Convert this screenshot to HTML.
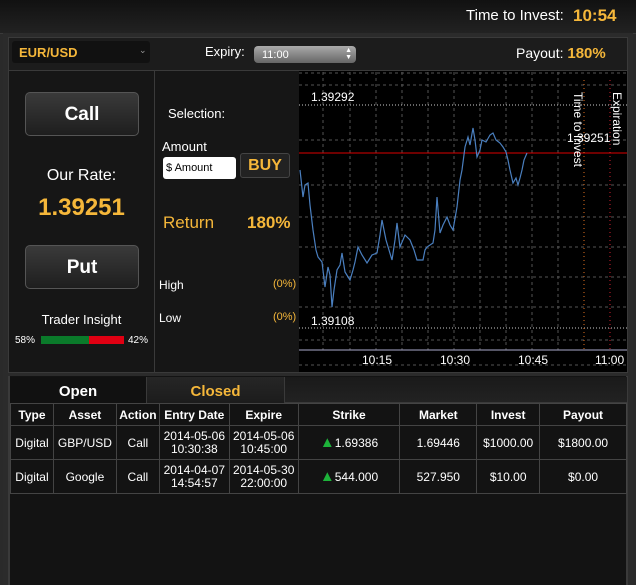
<!DOCTYPE html>
<html><head><meta charset="utf-8"><style>
*{margin:0;padding:0;box-sizing:border-box}
body{width:636px;height:585px;background:#2a2a2a;font-family:"Liberation Sans",sans-serif;color:#fff;position:relative;overflow:hidden}
.a{position:absolute}
.gold{color:#f5b73a}
.btn{position:absolute;background:linear-gradient(#3a3a3a,#1e1e1e);border:1px solid #555;border-radius:5px;font-weight:bold;font-size:19px;text-align:center}
table{border-collapse:collapse;font-size:12px}
td,th{border:1px solid #444;text-align:center;padding:0}
th{font-size:12px;font-weight:bold}
</style></head><body>
<div class="a" style="left:0;top:0;width:636px;height:34px;background:linear-gradient(#111,#222);border-bottom:1px solid #3a3a3a"></div>
<div class="a" style="left:466px;top:7px;font-size:15px">Time to Invest:</div>
<div class="a gold" style="left:573px;top:6px;font-size:17px;font-weight:bold">10:54</div>
<!-- main panel -->
<div class="a" style="left:3px;top:33px;width:630px;height:552px;background:#2b2b2b"></div>
<div class="a" style="left:8px;top:37px;width:620px;height:336px;background:#161616;border:1px solid #3a3a3a"></div>
<div class="a" style="left:9px;top:38px;width:618px;height:33px;background:#1c1c1c;border-bottom:1px solid #3a3a3a"></div>
<div class="a" style="left:12px;top:41px;width:138px;height:22px;background:#111;border-radius:3px"></div>
<div class="a gold" style="left:19px;top:45px;font-size:13px;font-weight:bold">EUR/USD</div>
<div class="a" style="left:139px;top:45px;font-size:9px;color:#999">&#8964;</div>
<div class="a" style="left:205px;top:44px;font-size:13px">Expiry:</div>
<div class="a" style="left:254px;top:46px;width:102px;height:17px;border-radius:4px;background:linear-gradient(#aaa,#666);font-size:11px;color:#fff;padding:3px 0 0 8px">11:00<span style="position:absolute;right:4px;top:1px;font-size:7px;line-height:7px">▲<br>▼</span></div>
<div class="a" style="left:516px;top:45px;font-size:14px">Payout: <b class="gold" style="font-size:15px">180%</b></div>
<!-- columns -->
<div class="a" style="left:154px;top:71px;width:1px;height:301px;background:#3a3a3a"></div>
<div class="btn" style="left:25px;top:92px;width:114px;height:44px;padding-top:11px">Call</div>
<div class="a" style="left:8px;width:147px;top:167px;text-align:center;font-size:16px">Our Rate:</div>
<div class="a gold" style="left:8px;width:147px;top:194px;text-align:center;font-size:24px;font-weight:bold">1.39251</div>
<div class="btn" style="left:25px;top:245px;width:114px;height:44px;padding-top:11px">Put</div>
<div class="a" style="left:8px;width:147px;top:312px;text-align:center;font-size:13px">Trader Insight</div>
<div class="a" style="left:15px;top:335px;font-size:10px">58%</div>
<div class="a" style="left:41px;top:336px;width:48px;height:8px;background:#0a7a2a"></div>
<div class="a" style="left:89px;top:336px;width:35px;height:8px;background:#e00012"></div>
<div class="a" style="left:128px;top:335px;font-size:10px">42%</div>
<div class="a" style="left:168px;top:106px;font-size:13px">Selection:</div>
<div class="a" style="left:162px;top:139px;font-size:13px">Amount</div>
<div class="a" style="left:163px;top:157px;width:73px;height:22px;background:#fff;border-radius:3px;color:#000;font-size:11px;padding:5px 0 0 3px">$ Amount</div>
<div class="a gold" style="left:240px;top:153px;width:50px;height:25px;background:#222;border:1px solid #444;border-radius:3px;text-align:center;font-weight:bold;font-size:16px;padding-top:3px">BUY</div>
<div class="a gold" style="left:163px;top:213px;font-size:17px">Return</div>
<div class="a gold" style="left:247px;top:213px;font-size:17px;font-weight:bold">180%</div>
<div class="a" style="left:159px;top:278px;font-size:12px">High</div>
<div class="a gold" style="left:273px;top:278px;font-size:11px">(0%)</div>
<div class="a" style="left:159px;top:311px;font-size:12px">Low</div>
<div class="a gold" style="left:273px;top:311px;font-size:11px">(0%)</div>
<!-- chart -->
<svg class="a" style="left:299px;top:71px" width="328" height="301" viewBox="299 71 328 301">
<rect x="299" y="71" width="328" height="301" fill="#000"/>
<g stroke="#555" stroke-dasharray="3,3" stroke-width="1">
<line x1="323" y1="72" x2="323" y2="350"/><line x1="350" y1="72" x2="350" y2="350"/><line x1="376" y1="72" x2="376" y2="350"/><line x1="402" y1="72" x2="402" y2="350"/><line x1="428" y1="72" x2="428" y2="350"/><line x1="454" y1="72" x2="454" y2="350"/><line x1="480" y1="72" x2="480" y2="350"/><line x1="506" y1="72" x2="506" y2="350"/><line x1="532" y1="72" x2="532" y2="350"/><line x1="558" y1="72" x2="558" y2="350"/>
<line x1="299" y1="73" x2="627" y2="73"/><line x1="299" y1="85" x2="627" y2="85"/><line x1="299" y1="140" x2="627" y2="140"/><line x1="299" y1="185" x2="627" y2="185"/><line x1="299" y1="217" x2="627" y2="217"/><line x1="299" y1="247" x2="627" y2="247"/><line x1="299" y1="277" x2="627" y2="277"/><line x1="299" y1="307" x2="627" y2="307"/><line x1="299" y1="340" x2="627" y2="340"/><line x1="299" y1="365" x2="627" y2="365"/>
</g>
<g stroke="#ccc" stroke-dasharray="1,2"><line x1="299" y1="105" x2="627" y2="105"/><line x1="299" y1="328" x2="627" y2="328"/></g>
<line x1="299" y1="153" x2="627" y2="153" stroke="#d00" stroke-width="1"/>
<line x1="584" y1="80" x2="584" y2="350" stroke="#e07020" stroke-dasharray="1,3"/>
<line x1="610" y1="80" x2="610" y2="350" stroke="#d02030" stroke-dasharray="1,3"/>
<line x1="299" y1="350" x2="627" y2="350" stroke="#aac" stroke-width="1"/>
<polyline fill="none" stroke="#4a7fbf" stroke-width="1.2" points="300,170 303,197 305,185 308,183 310,205 313,230 316,250 318,257 322,262 325,287 328,267 330,275 332,307 334,290 337,270 340,265 342,253 345,272 350,280 353,270 355,262 358,247 362,255 367,263 372,255 377,253 380,235 382,220 386,240 392,260 395,240 397,223 400,247 405,235 410,240 414,250 417,260 423,260 425,250 427,247 433,243 435,230 437,197 440,233 443,225 447,217 450,225 453,230 457,207 460,180 462,170 465,147 468,137 470,145 473,128 475,140 477,157 480,150 482,140 486,142 490,135 493,133 496,140 500,143 503,147 506,152 508,160 510,170 513,183 516,178 518,185 520,178 522,170 524,160 527,153"/>
<g fill="#fff" font-family="Liberation Sans,sans-serif" font-size="12">
<text x="311" y="101">1.39292</text><text x="311" y="325">1.39108</text><text x="567" y="142">1.39251</text>
<text x="362" y="364">10:15</text><text x="440" y="364">10:30</text><text x="518" y="364">10:45</text><text x="595" y="364">11:00</text>
<text transform="translate(574,92) rotate(90)">Time to Invest</text>
<text transform="translate(613,92) rotate(90)">Expiration</text>
</g>
</svg>
<!-- bottom -->
<div class="a" style="left:8px;top:376px;width:620px;height:209px;background:#131313;border-left:2px solid #3a3a3a;border-right:2px solid #3a3a3a"></div>
<div class="a" style="left:10px;top:377px;width:617px;height:26px;background:linear-gradient(#1a1a1a,#222);border-bottom:1px solid #3a3a3a"></div>
<div class="a" style="left:10px;top:377px;width:137px;height:26px;background:#111;border-right:1px solid #3a3a3a;text-align:center;font-weight:bold;font-size:15px;padding-top:6px">Open</div>
<div class="a gold" style="left:147px;top:377px;width:138px;height:26px;background:linear-gradient(#262626,#1c1c1c);border-right:1px solid #3a3a3a;text-align:center;font-weight:bold;font-size:15px;padding-top:6px">Closed</div>
<table class="a" style="left:10px;top:403px;width:617px">
<colgroup><col style="width:43px"><col style="width:63px"><col style="width:43px"><col style="width:70px"><col style="width:69px"><col style="width:102px"><col style="width:77px"><col style="width:63px"><col style="width:87px"></colgroup>
<tr style="height:22px"><th>Type</th><th>Asset</th><th>Action</th><th>Entry Date</th><th>Expire</th><th>Strike</th><th>Market</th><th>Invest</th><th>Payout</th></tr>
<tr style="height:34px"><td>Digital</td><td>GBP/USD</td><td>Call</td><td style="line-height:13px">2014-05-06<br>10:30:38</td><td style="line-height:13px">2014-05-06<br>10:45:00</td><td><span style="color:#1db33a;font-size:15px">▲</span>1.69386</td><td>1.69446</td><td>$1000.00</td><td>$1800.00</td></tr>
<tr style="height:34px"><td>Digital</td><td>Google</td><td>Call</td><td style="line-height:13px">2014-04-07<br>14:54:57</td><td style="line-height:13px">2014-05-30<br>22:00:00</td><td><span style="color:#1db33a;font-size:15px">▲</span>544.000</td><td>527.950</td><td>$10.00</td><td>$0.00</td></tr>
</table>
</body></html>
